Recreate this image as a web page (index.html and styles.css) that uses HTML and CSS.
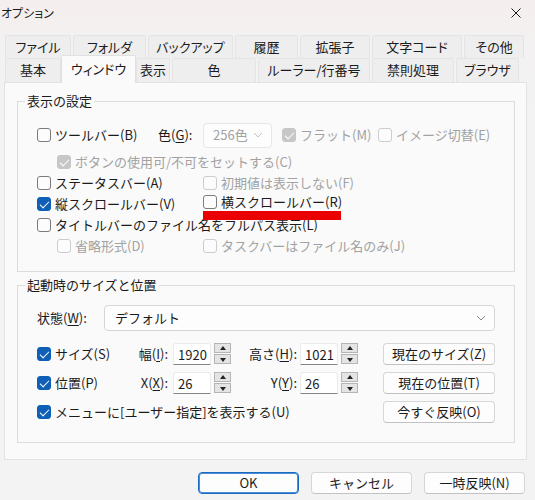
FILE: index.html
```html
<!DOCTYPE html>
<html lang="ja">
	<head>
		<meta charset="UTF-8" />
		<meta name="viewport" content="width=device-width, initial-scale=1.0" />
		<title>オプション</title>
		<link rel="stylesheet" href="styles.css">
	</head>

	<body>
		<div class="dialog">
			<!--title bar-->
			<header class="titlebar">
				<span class="titlebar__text">オプション</span>
				<svg class="titlebar__close" viewBox="0 0 10 10" aria-hidden="true">
					<path d="M0.5,0.5 L9.5,9.5 M9.5,0.5 L0.5,9.5" />
				</svg>
			</header>

			<!--two rows of tabs, the front row holds the selected one-->
			<nav class="tabs">
				<div class="tabs__row">
					<span class="tab tab--file">ファイル</span>
					<span class="tab tab--folder">フォルダ</span>
					<span class="tab tab--backup">バックアップ</span>
					<span class="tab tab--history">履歴</span>
					<span class="tab tab--ext">拡張子</span>
					<span class="tab tab--code">文字コード</span>
					<span class="tab tab--other">その他</span>
				</div>
				<div class="tabs__row tabs__row--front">
					<span class="tab tab--basic">基本</span>
					<span class="tab tab--window tab--active">ウィンドウ</span>
					<span class="tab tab--view">表示</span>
					<span class="tab tab--color">色</span>
					<span class="tab tab--ruler">ルーラー/行番号</span>
					<span class="tab tab--kinsoku">禁則処理</span>
					<span class="tab tab--browser">ブラウザ</span>
				</div>
			</nav>

			<main class="panel">
				<fieldset class="group group--view">
					<legend>表示の設定</legend>
					<div class="view-grid">
						<div class="tool-row">
							<label class="check tool-row__check"><span class="box"></span>ツールバー(B)</label>
							<span class="tool-row__label">色(<u>G</u>):</span>
							<span class="select select--dim">256色
								<svg class="chevron" viewBox="0 0 10 6" aria-hidden="true"><polyline points="1,1 5,5 9,1" /></svg>
							</span>
							<label class="check check--dim tool-row__flat"><span class="box box--dim-on"></span>フラット(M)</label>
							<label class="check check--dim"><span class="box box--dim"></span>イメージ切替(E)</label>
						</div>

						<label class="check check--dim wide indent"><span class="box box--dim-on"></span>ボタンの使用可/不可をセットする(C)</label>

						<label class="check"><span class="box"></span>ステータスバー(A)</label>
						<label class="check check--dim"><span class="box box--dim"></span>初期値は表示しない(F)</label>

						<label class="check"><span class="box box--on"></span>縦スクロールバー(V)</label>
						<div class="marked">
							<label class="check"><span class="box"></span>横スクロールバー(R)</label>
							<!--red marker drawn over the screenshot-->
							<span class="marked__bar"></span>
						</div>

						<label class="check wide"><span class="box"></span>タイトルバーのファイル名をフルパス表示(L)</label>

						<label class="check check--dim indent"><span class="box box--dim"></span>省略形式(D)</label>
						<label class="check check--dim"><span class="box box--dim"></span>タスクバーはファイル名のみ(J)</label>
					</div>
				</fieldset>

				<fieldset class="group group--start">
					<legend>起動時のサイズと位置</legend>
					<div class="state-row">
						<span class="state-row__label">状態(<u>W</u>):</span>
						<span class="select select--wide">デフォルト
							<svg class="chevron" viewBox="0 0 10 6" aria-hidden="true"><polyline points="1,1 5,5 9,1" /></svg>
						</span>
					</div>

					<div class="size-row">
						<label class="check size-row__check"><span class="box box--on"></span>サイズ(S)</label>
						<span class="size-row__label size-row__label--first">幅(<u>I</u>):</span>
						<span class="num">1920</span>
						<span class="spin"><span class="spin__up"></span><span class="spin__down"></span></span>
						<span class="size-row__label size-row__label--second">高さ(<u>H</u>):</span>
						<span class="num">1021</span>
						<span class="spin"><span class="spin__up"></span><span class="spin__down"></span></span>
						<button class="btn size-row__btn">現在のサイズ(Z)</button>
					</div>

					<div class="size-row">
						<label class="check size-row__check"><span class="box box--on"></span>位置(P)</label>
						<span class="size-row__label size-row__label--first">X(<u>X</u>):</span>
						<span class="num">26</span>
						<span class="spin"><span class="spin__up"></span><span class="spin__down"></span></span>
						<span class="size-row__label size-row__label--second">Y(<u>Y</u>):</span>
						<span class="num">26</span>
						<span class="spin"><span class="spin__up"></span><span class="spin__down"></span></span>
						<button class="btn size-row__btn">現在の位置(T)</button>
					</div>

					<div class="size-row">
						<label class="check"><span class="box box--on"></span>メニューに[ユーザー指定]を表示する(U)</label>
						<button class="btn size-row__btn">今すぐ反映(O)</button>
					</div>
				</fieldset>
			</main>

			<footer class="actions">
				<button class="btn btn--action btn--default">OK</button>
				<button class="btn btn--action">キャンセル</button>
				<button class="btn btn--action">一時反映(N)</button>
			</footer>
		</div>
	</body>
</html>
```

FILE: styles.css
```css
:root {
	--text: #1b1b1b;
	--text-dim: #a2a2a2;
	--accent: #0f5fb6;
	--panel: #fafafa;
	--line: #dcdcdc;
}
* {
	box-sizing: border-box;
}
body {
	margin: 0;
	width: 535px;
	height: 500px;
	overflow: hidden;
	background: linear-gradient(#f5eeee 0, #f3f1f1 40px, #f3f3f3 120px);
	color: var(--text);
	font: 13px/18px "Noto Sans CJK JP", sans-serif;
}
u {
	text-decoration-thickness: 1px;
	text-underline-offset: 2px;
}
.titlebar {
	height: 35px;
	display: flex;
	justify-content: space-between;
	padding: 4px 14px 0 1px;
}
.titlebar__text {
	font-size: 12px;
	font-feature-settings: "palt";
}
.titlebar__close {
	width: 10px;
	height: 10px;
	margin-top: 4px;
	fill: none;
	stroke: var(--text);
	stroke-width: 1;
}

/*tabs*/
.tabs {
	padding-left: 5px;
}
.tabs__row {
	display: flex;
	gap: 2px;
	height: 23px;
}
.tabs__row--front {
	height: 24px;
}
.tab {
	background: #eeeeee;
	border: 1px solid #e4e4e4;
	border-bottom: 0;
	border-radius: 2px 2px 0 0;
	text-align: center;
	line-height: 21px;
	font-feature-settings: "palt";
	white-space: nowrap;
}
.tab--file { width: 66px; }
.tab--folder { width: 73px; }
.tab--backup { width: 85px; }
.tab--history { width: 63px; }
.tab--ext { width: 70px; }
.tab--code { width: 90px; }
.tab--other { width: 60px; }
.tab--basic { width: 56px; }
.tab--window { width: 75px; }
.tab--view { width: 34px; }
.tab--color { width: 84px; }
.tab--ruler { width: 112px; }
.tab--kinsoku { width: 82px; }
.tab--browser { width: 63px; }
.tab--active {
	position: relative; /*so it covers the panel border*/
	z-index: 1;
	margin: -3px -2px -1px;
	padding-top: 2px;
	background: var(--panel);
	border-color: #e0e0e0;
}

/*tab page*/
.panel {
	margin-left: 4px;
	width: 523px;
	height: 378px;
	padding: 9px 11px 0 12px;
	background: var(--panel);
	border: 1px solid #e2e2e2;
}
.group {
	margin: 0;
	border: 1px solid var(--line);
	padding: 12px 18px 15px 19px;
	min-width: 0;
}
.group legend {
	margin-left: -12px;
	padding: 0 2px;
	line-height: 18px;
}
.group--start {
	margin-top: 4px;
	padding: 11px 19px 16px 19px;
}

.view-grid {
	display: grid;
	grid-template-columns: 166px 1fr;
	grid-template-rows: 29px;
	grid-auto-rows: 21px;
}
.wide {
	grid-column: 1 / -1;
}
.indent {
	padding-left: 20px;
}
.tool-row {
	grid-column: 1 / -1;
	display: flex;
	align-items: center;
	height: 26px;
}
.tool-row__check {
	width: 121px;
}
.tool-row__label {
	width: 45px;
}
.tool-row__flat {
	width: 96px;
	margin-left: 10px;
}

/*check boxes*/
.check {
	display: flex;
	align-items: center;
	white-space: nowrap;
}
.check--dim {
	color: var(--text-dim);
}
.box {
	position: relative;
	flex: none;
	width: 14px;
	height: 14px;
	margin-right: 4px;
	border: 1px solid #7c7c7c;
	border-radius: 3px;
	background: #fcfcfc;
}
.box--dim {
	border-color: #cdcdcd;
}
.box--on,
.box--dim-on {
	background: var(--accent);
	border-color: var(--accent);
}
.box--dim-on {
	background: #c7c7c7;
	border-color: #c7c7c7;
}
.box--on::after,
.box--dim-on::after {
	content: "";
	position: absolute;
	left: 4px;
	top: 1px;
	width: 4px;
	height: 8px;
	border: solid #fff;
	border-width: 0 1.5px 1.5px 0;
	transform: rotate(45deg);
}

.marked {
	position: relative;
}
.marked__bar {
	position: absolute;
	left: 0;
	top: 18px;
	width: 138px;
	height: 9px;
	background: #ea0000;
	z-index: 1;
}

/*drop downs*/
.select {
	display: flex;
	align-items: center;
	justify-content: space-between;
	height: 25px;
	padding: 0 8px 0 9px;
	background: #fdfdfd;
	border: 1px solid #d6d6d6;
	border-radius: 4px;
}
.select--dim {
	width: 69px;
	color: var(--text-dim);
	border-color: #e6e6e6;
}
.select--dim .chevron {
	stroke: #c4c4c4;
}
.select--wide {
	flex: 1;
	height: 26px;
	padding-left: 10px;
}
.chevron {
	width: 10px;
	height: 6px;
	fill: none;
	stroke: #8c8c8c;
	stroke-width: 1;
}

.state-row {
	display: flex;
	align-items: center;
	height: 26px;
	margin-bottom: 8px;
}
.state-row__label {
	width: 67px;
	flex: none;
}

.size-row {
	display: flex;
	align-items: center;
	height: 29px;
}
.size-row__check {
	width: 96px;
}
.size-row__label {
	text-align: right;
	flex: none;
}
.size-row__label--first {
	width: 35px;
}
.size-row__label--second {
	width: 66px;
}
.num {
	width: 38px;
	height: 22px;
	margin: 0 3px 0 5px;
	padding-left: 4px;
	line-height: 21px;
	background: #fff;
	border: 1px solid #ebebeb;
	border-bottom-color: #858585;
	border-radius: 3px 3px 0 0;
}
.size-row__label--second + .num {
	margin-left: 3px;
}
.spin {
	display: flex;
	flex-direction: column;
	width: 17px;
	height: 21px;
	gap: 1px;
}
.spin__up,
.spin__down {
	flex: 1;
	display: flex;
	align-items: center;
	justify-content: center;
	background: #e4e4e4;
	border: 1px solid #b5b5b5;
}
.spin__up::after,
.spin__down::after {
	content: "";
	border: 3px solid transparent;
}
.spin__up::after {
	border-bottom: 4px solid #222;
	margin-top: -4px;
}
.spin__down::after {
	border-top: 4px solid #222;
	margin-bottom: -4px;
}

/*push buttons*/
.btn {
	display: flex;
	align-items: center;
	justify-content: center;
	height: 22px;
	padding: 0;
	background: #fdfdfd;
	color: var(--text);
	font: inherit;
	border: 1px solid #d6d6d6;
	border-bottom-color: #c2c2c2;
	border-radius: 4px;
}
.size-row__btn {
	width: 112px;
	margin-left: auto;
}
.actions {
	display: flex;
	justify-content: flex-end;
	gap: 12px;
	padding: 12px 10px 0 0;
}
.btn--action {
	width: 101px;
}
.btn--default {
	border-color: #1a6ac0;
	box-shadow: inset 0 0 0 1px #4d8fd4;
}
```
